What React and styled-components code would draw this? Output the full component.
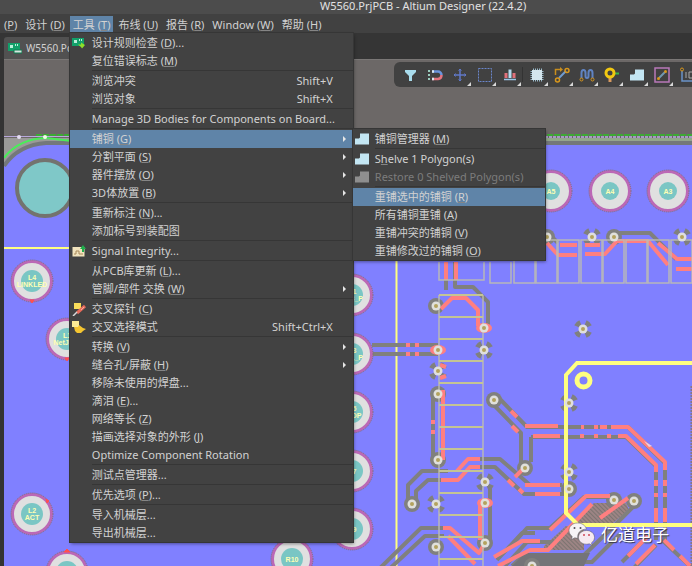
import React from "react";
import styled, { createGlobalStyle } from "styled-components";

const GlobalStyle = createGlobalStyle`
  * { box-sizing: border-box; }
  body {
    margin: 0;
    background: #333333;
    overflow: hidden;
    font-family: "Noto Sans", "Noto Sans CJK SC", sans-serif;
    font-size: 11px;
    color: #d2d2d2;
  }
  button { font: inherit; color: inherit; border: 0; background: none; padding: 0; }
  ul { list-style: none; margin: 0; padding: 0; }
`;

/* ---------- window frame ---------- */

const Window = styled.div`
  min-height: 100vh;
  display: flex;
  flex-direction: column;
  overflow: hidden;
`;

const TitleBar = styled.header`
  height: 14px;
  padding-left: 320px;
  background: #4c4c4c;
  color: #e2e2e2;
  font-size: 11px;
  line-height: 12px;
  white-space: nowrap;
`;

const MenuBar = styled.nav`
  height: 19px;
  padding: 2px 0 0 1px;
  display: flex;
  gap: 2px;
  background: #414141;
`;

const MenuBarItem = styled.div`
  position: relative;
  z-index: 2;
  flex: none;
`;

const MenuBarButton = styled.button`
  height: 17px;
  padding: 0 3px;
  line-height: 17px;
  white-space: nowrap;
  background: ${(p) => (p.$open ? "#5f84a8" : "transparent")};
`;

const TabStrip = styled.div`
  height: 26px;
  padding: 4px 0 0 4px;
  display: flex;
  background: #353535;
`;

const Tab = styled.button`
  width: 140px;
  padding: 0 4px;
  display: flex;
  align-items: center;
  gap: 4px;
  border-radius: 3px 3px 0 0;
  background: #515151;
  font-size: 10px;
  line-height: 20px;
  white-space: nowrap;
`;

const Workspace = styled.main`
  position: relative;
  flex: 1;
  margin-left: 4px;
  border-top: 1px solid #7a7776;
  background: #6c6867;
  overflow: hidden;
`;

const Board = styled.svg`
  position: absolute;
  inset: 0;
  width: 100%;
  height: 100%;
`;

/* ---------- menus ---------- */

const Menu = styled.ul`
  position: absolute;
  top: ${(p) => (p.$sub ? "-1px" : "100%")};
  left: ${(p) => (p.$sub ? "100%" : "0")};
  width: ${(p) => (p.$sub ? "192px" : "283px")};
  padding-top: 1px;
  background: #424242;
  box-shadow: 0 0 0 1px #363636, 1px 2px 3px rgba(0, 0, 0, 0.4);
`;

const MenuRow = styled.li`
  position: relative;
`;

const MenuButton = styled.button`
  width: 100%;
  height: 18px;
  padding-right: 7px;
  display: grid;
  grid-template-columns: 22px 1fr auto 13px;
  align-items: center;
  text-align: left;
  line-height: 18px;
  white-space: nowrap;
  background: ${(p) => (p.$active ? "#5f84a8" : "transparent")};
  color: ${(p) => (p.disabled ? "#7c7c7c" : "#d2d2d2")};
`;

const MenuIcon = styled.span`
  display: flex;
  padding-left: 2px;
`;

const Divider = styled.li`
  height: 2px;
  margin-left: 22px;
  border-top: 1px solid #363636;
`;

const Arrow = styled.span`
  justify-self: end;
  border-left: 3px solid #e6e6e6;
  border-top: 3px solid transparent;
  border-bottom: 3px solid transparent;
`;

const Mnemonic = styled.span`
  text-decoration: underline;
  text-decoration-thickness: 1px;
  text-underline-offset: 1px;
  text-decoration-color: #858585;
`;

/* ---------- floating tool bar ---------- */

const ToolBar = styled.div`
  position: absolute;
  top: 2px;
  left: 390px;
  height: 25px;
  padding-left: 3px;
  display: flex;
  border-radius: 6px 0 0 6px;
  background: #414141;
`;

const ToolButton = styled.button`
  position: relative;
  width: 25px;
  height: 25px;
  display: grid;
  place-items: center;
  &::after {
    content: "";
    display: ${(p) => (p.$more ? "block" : "none")};
    position: absolute;
    right: 1px;
    bottom: 1px;
    border-left: 4px solid transparent;
    border-bottom: 4px solid #d8d8d8;
  }
`;

const ToolSeparator = styled.span`
  width: 1px;
  margin: 5px 1px 5px 0;
  background: #333333;
`;

const Watermark = styled.div`
  position: absolute;
  right: 23px;
  bottom: 17px;
  display: flex;
  align-items: center;
  gap: 6px;
  color: #ffffff;
  font-size: 17px;
  line-height: 28px;
  text-shadow: 1px 1px 1px #333344;
`;

/* ---------- icons ---------- */

const BoardIcon = ({ check }) => (
  <svg width="14" height="12" viewBox="0 0 14 12">
    <rect x="0" y="1" width="12" height="8" fill="#12a06a" />
    <path d="M2 3h3v3H2zM7 2h1v2H7zM9 2h1v2H9z" fill="#b9f0da" />
    {check ? (
      <path d="M6 7.500h3V5.500l4 2.500-3 3.500-1-1.500z" fill="#8fe02a" />
    ) : (
      <path d="M6 8h8v3H6z" fill="#d8e6e0" stroke="#0d7c50" strokeWidth="1" />
    )}
  </svg>
);

const SignalIcon = () => (
  <svg width="14" height="12" viewBox="0 0 14 12">
    <rect x="0.500" y="2" width="12" height="9.500" fill="#f1e3bd" />
    <path d="M2 9h2V6h3v3h4" stroke="#a8895a" fill="none" />
    <path d="M8 4l3-4 3 4h-2v3h-2V4z" fill="#1fae4c" />
  </svg>
);

const ProbeIcon = () => (
  <svg width="14" height="13" viewBox="0 0 14 13">
    <rect x="2" y="0" width="7" height="6" fill="#f8dc5a" />
    <path d="M13 3l-8 7" stroke="#e86a5a" strokeWidth="3" />
    <path d="M5 9l-4 4" stroke="#d8d8d8" strokeWidth="1.500" />
    <path d="M9 7l3-3" stroke="#f6b0a0" />
  </svg>
);

const SelectIcon = () => (
  <svg width="14" height="13" viewBox="0 0 14 13">
    <rect x="0" y="0" width="7" height="6" fill="#fbeb96" />
    <path d="M2 6h4l1-2 4 3 3 1-3 2-2 2H5L3 10z" fill="#f4c531" />
  </svg>
);

const PolygonIcon = ({ color = "#c3e6f3" }) => (
  <svg width="14" height="12" viewBox="0 0 14 12">
    <path d="M0 11.500V5.500h4L5 4.500V0.500h9v11z" fill={color} />
  </svg>
);

const tools = [
  <svg key="filter" width="14" height="14" viewBox="0 0 14 14">
    <path d="M2 2h11v2L9 8v5H6V8L2 4z" fill="#a9dcec" />
  </svg>,
  <svg key="snap" width="16" height="14" viewBox="0 0 16 14" fill="none">
    <path d="M2 2v11" stroke="#9ccfc0" strokeWidth="2" strokeDasharray="2 2" />
    <path d="M5 3.500h6a3.500 3.500 0 0 1 3.500 3.500" stroke="#6a93dd" strokeWidth="2.500" />
    <path d="M5 11h6a4 4 0 0 0 3.500-4" stroke="#e27480" strokeWidth="2.500" />
    <path d="M5 3.500h2M5 11h2" stroke="#dce8f0" strokeWidth="2.500" />
  </svg>,
  <svg key="move" width="14" height="14" viewBox="0 0 14 14" fill="none" stroke="#6078c8">
    <path d="M7 1v12M1 7h12" strokeWidth="1.500" />
    <path d="M5.500 2.500L7 1l1.500 1.500M5.500 11.500L7 13l1.500-1.500M2.500 5.500L1 7l1.500 1.500M11.500 5.500L13 7l-1.500 1.500" />
  </svg>,
  <svg key="area" width="16" height="14" viewBox="0 0 16 14" fill="none">
    <rect x="1.500" y="0.500" width="13" height="13" stroke="#6a86cc" strokeDasharray="2 1" />
  </svg>,
  <svg key="align" width="14" height="14" viewBox="0 0 14 14">
    <path d="M1.500 5h3v5h-3zM9.500 5h3v5h-3z" fill="#e0707a" />
    <path d="M5.500 1.500h3V10h-3z" fill="#b5dcf0" />
    <path d="M1 11.500h12" stroke="#9cc6e8" strokeWidth="1.500" />
  </svg>,
  <svg key="chip" width="14" height="14" viewBox="0 0 14 14">
    <path d="M3 1.500h9M3 12.500h9M1.500 3v9M12.500 3v9" stroke="#9cbccc" strokeWidth="2" strokeDasharray="1 1" />
    <rect x="2" y="2" width="10" height="10" fill="#d4e6ee" />
  </svg>,
  <svg key="route" width="16" height="16" viewBox="0 0 16 16" fill="none">
    <path d="M1.500 8V2.500H7" stroke="#c98e1e" strokeWidth="1.500" />
    <path d="M6 0l3 2.500L6 5z" fill="#c98e1e" />
    <path d="M5 11l7-7" stroke="#6e9bd0" strokeWidth="2" />
    <circle cx="3.500" cy="13" r="2" stroke="#d9971c" strokeWidth="1.500" />
    <circle cx="13" cy="3.500" r="2" stroke="#d9971c" strokeWidth="1.500" />
  </svg>,
  <svg key="tune" width="16" height="14" viewBox="0 0 16 14" fill="none">
    <path d="M2.500 10V5q0-3 2-3t2 3v3q0 2 1.500 2T9.500 8V5q0-3 2-3t2 3v5" stroke="#6084c4" strokeWidth="2" />
    <circle cx="2.500" cy="11.500" r="1.500" stroke="#d9971c" />
    <circle cx="13.500" cy="11.500" r="1.500" stroke="#d9971c" />
  </svg>,
  <svg key="via" width="16" height="16" viewBox="0 0 16 16" fill="none">
    <path d="M9 6.500h6" stroke="#3eb54a" strokeWidth="2" />
    <path d="M6 9v6" stroke="#d99a60" strokeWidth="3" />
    <circle cx="6" cy="6" r="4" stroke="#f2c811" strokeWidth="3" />
  </svg>,
  <PolygonIcon key="polygon" />,
  <svg key="line" width="16" height="16" viewBox="0 0 16 16" fill="none">
    <rect x="1" y="1" width="14" height="14" stroke="#b978b9" strokeWidth="1.500" />
    <path d="M5 11l6-6" stroke="#7198b0" strokeWidth="2" />
    <circle cx="4.500" cy="11.500" r="1.500" fill="#d9971c" />
    <circle cx="11.500" cy="4.500" r="1.500" fill="#d9971c" />
  </svg>,
  <svg key="measure" width="16" height="16" viewBox="0 0 16 16" fill="none">
    <path d="M3 4v10h13" stroke="#6a93c8" strokeWidth="1.500" />
    <circle cx="3" cy="2.500" r="1.500" stroke="#d9971c" />
    <path d="M7 5v6M10 5h4v6h-4z" stroke="#a8a8a8" />
  </svg>,
];

const toolNames = ["Filter", "Snap", "Move", "Select area", "Align", "Component", "Route", "Tune length", "Via", "Polygon", "Line", "Dimension"];

/* ---------- menu data: [text, mnemonic, tail, options] ---------- */

const toolsMenu = [
  ["设计规则检查", "D", "...", { icon: <BoardIcon check /> }],
  ["复位错误标志", "M"],
  null,
  ["浏览冲突", "", "", { keys: "Shift+V" }],
  ["浏览对象", "", "", { keys: "Shift+X" }],
  null,
  ["Manage 3D Bodies for Components on Board..."],
  null,
  ["铺铜", "G", "", { sub: true, active: true }],
  ["分割平面", "S", "", { sub: true }],
  ["器件摆放", "O", "", { sub: true }],
  ["3D体放置", "B", "", { sub: true }],
  null,
  ["重新标注", "N", "..."],
  ["添加标号到装配图"],
  null,
  ["Signal Integrity...", "", "", { icon: <SignalIcon /> }],
  null,
  ["从PCB库更新", "L", "..."],
  ["管脚/部件 交换", "W", "", { sub: true }],
  null,
  ["交叉探针", "C", "", { icon: <ProbeIcon /> }],
  ["交叉选择模式", "", "", { icon: <SelectIcon />, keys: "Shift+Ctrl+X" }],
  null,
  ["转换", "V", "", { sub: true }],
  ["缝合孔/屏蔽", "H", "", { sub: true }],
  ["移除未使用的焊盘..."],
  ["滴泪", "E", "..."],
  ["网络等长", "Z"],
  ["描画选择对象的外形", "J"],
  ["Optimize Component Rotation"],
  null,
  ["测试点管理器..."],
  null,
  ["优先选项", "P", "..."],
  null,
  ["导入机械层..."],
  ["导出机械层..."],
];

const polygonMenu = [
  ["铺铜管理器", "M", "", { icon: <PolygonIcon /> }],
  null,
  [<>S<Mnemonic>h</Mnemonic>elve 1 Polygon(s)</>, "", "", { icon: <PolygonIcon /> }],
  ["Restore 0 Shelved Polygon(s)", "", "", { icon: <PolygonIcon color="#8e8e8e" />, disabled: true }],
  null,
  ["重铺选中的铺铜", "R", "", { active: true }],
  ["所有铺铜重铺", "A"],
  ["重铺冲突的铺铜", "V"],
  ["重铺修改过的铺铜", "O"],
];

const Label = ({ text, letter, tail }) => (
  <span>
    {text}
    {letter ? <>{text ? " " : ""}(<Mnemonic>{letter}</Mnemonic>)</> : null}
    {tail}
  </span>
);

const MenuList = ({ items, sub }) => (
  <Menu $sub={sub} role="menu">
    {items.map((item, i) => {
      if (!item) return <Divider key={i} role="separator" />;
      const [text, letter, tail, o = {}] = item;
      return (
        <MenuRow key={i} role="none">
          <MenuButton role="menuitem" $active={o.active} disabled={o.disabled}>
            <MenuIcon>{o.icon}</MenuIcon>
            <Label text={text} letter={letter} tail={tail} />
            <span>{o.keys}</span>
            {o.sub ? <Arrow /> : <span />}
          </MenuButton>
          {o.sub && o.active ? <MenuList items={polygonMenu} sub /> : null}
        </MenuRow>
      );
    })}
  </Menu>
);

const menuBarItems = [["", "P"], ["设计", "D"], ["工具", "T"], ["布线", "U"], ["报告", "R"], ["Window", "W"], ["帮助", "H"]];

/* ---------- circuit board drawing ---------- */

const GRAY = "#80807e";
const RED = "#ff7f80";

const pads = [
  [32, 281, 11, "L4", "LINKLED"], [67, 339, 11, "L1", "NetJ2_1"], [32, 514, 11, "L2", "ACT"], [67, 572, 11, "", ""],
  [352, 295, 11, "R1", "TD3_P"], [352, 354, 11, "R3", "TD1_P"], [352, 412, 11, "R5", "STOP"], [352, 471, 11, "R7", ""], [352, 529, 11, "R9", ""],
  [292, 559, 11, "R10", ""],
  [551, 191, 9, "A5", ""], [610, 191, 9, "A4", ""], [668, 191, 9, "A3", ""],
];

/* x, y, halo: solid ("s"), thermal ("t") or teardrop ("r"), halo colour */
const vias = [
  [436, 306, "s", GRAY], [484, 328, "r", RED], [438, 350, "r", RED], [484, 350, "t", GRAY], [438, 371, "t", GRAY],
  [438, 394, "s", GRAY], [494, 400, "s", GRAY], [438, 460, "s", GRAY], [525, 468, "s", GRAY], [485, 482, "t", GRAY],
  [412, 504, "s", GRAY], [436, 504, "t", GRAY], [485, 503, "r", RED], [485, 543, "s", GRAY], [436, 547, "s", GRAY],
  [547, 237, "s", GRAY], [592, 237, "t", GRAY], [614, 237, "s", GRAY], [682, 237, "t", GRAY], [583, 329, "t", GRAY],
  [569, 403, "t", GRAY], [569, 472, "t", GRAY], [569, 489, "s", GRAY], [614, 500, "s", GRAY], [634, 501, "s", GRAY], [532, 566, "s", GRAY],
];

const grayTraces = [
  "M372 345H438", "M372 354H438", "M455 262V287H473L488 302V326", "M446 262V290",
  "M433 396V460", "M497 396L527 427H628L665 463V540", "M492 403L521 433V466", "M531 437V462",
  "M531 437H626L656 466V540", "M479 459H500L530 485H562", "M479 467H495L524 494H566",
  "M448 471H422L408 485V502", "M450 480H428L416 491V502", "M376 572L421 528H446", "M384 574L425 536H444",
  "M490 485V540", "M547 232L558 243", "M614 233H650L676 259", "M497 560L522 533H535", "M505 566L527 542H560",
  "M512 545L527 528H550L584 497H610", "M512 566L524 555H584L612 528L634 506", "M524 562H592L620 534",
  "M656 545L632 570", "M662 540L692 568", "M650 534L622 562",
];

const redTraces = [
  "M446 262V280", "M456 262V280", "M441 309L452 298H466L478 310V326", "M443 390V460",
  "M441 480H458L470 467H480", "M457 471L468 459H480", "M443 528H450L479 553L487 540", "M448 536L475 564",
  "M480 500V540", "M525 426H558", "M600 427H607M594 427H598M581 427H584M611 427H628L665 462V470",
  "M533 436H560M580 436H584M594 436H598M607 436H611M618 436H626L656 465V472",
  "M656 480V486M656 493V497M665 480V486M665 493V497M656 508V522M665 508V522",
  "M511 411L517 417M512 426L518 432M515 477L522 470M508 480L514 486M519 489L523 493",
  "M525 485H560M535 494H560", "M547 243L558 255H577M560 245H577M585 245H600M585 254H605L617 241H648L668 265",
  "M658 243L677 259H692M676 269H692", "M406 345H410M415 345H419M406 354H410M415 354H419M431 422H435M431 432H435",
  "M494 557L522 541H540M550 530L586 496H610", "M498 566L530 550H548L592 504", "M628 498L600 518",
  "M655 545L636 564M664 540L674 550M680 556L690 566M648 536L628 556", "M440 365L446 367M440 378L446 376",
];

const columnRows = Array.from({ length: 13 }, (_, i) => 295 + i * 22);
const topCells = [514, 536, 558, 581, 603, 626, 648, 671];

const Halo = ({ x, y, kind, color }) => {
  if (kind === "s") return <circle cx={x} cy={y} r="8" fill={color} />;
  if (kind === "r") return <ellipse cx={x} cy={y} rx="8" ry="5" fill={color} />;
  return (
    <circle cx={x} cy={y} r="7" fill="none" stroke={color} strokeWidth="5" pathLength="8" strokeDasharray="1 1" strokeDashoffset="-0.500" />
  );
};

const Circuit = () => (
  <Board viewBox="4 60 688 506" preserveAspectRatio="xMinYMin slice" aria-hidden="true">
    <defs>
      <pattern id="hatch" width="3" height="3" patternUnits="userSpaceOnUse" patternTransform="rotate(-45)">
        <rect width="3" height="3" fill="#9c8484" />
        <rect width="1" height="3" fill="#7c7470" />
      </pattern>
    </defs>
    <path d="M4 138H700V600H4z" fill="#9a9a98" />
    <path d="M4 166Q18 145 44 143H700V600H4z" fill="#8080ff" />
    <path d="M4 166Q18 145 46 143H700" stroke="#74787a" strokeWidth="4" fill="none" />
    <path d="M4 158Q18 139 46 138L72 141" stroke="#49ee58" strokeWidth="2" fill="none" />
    <path d="M4 136.500H70" stroke="#b9a9dc" />
    <path d="M36 135H692" stroke="#3caa34" strokeWidth="2" strokeDasharray="6 1" fill="none" />
    <path d="M545 137H692" stroke="#a69ac4" strokeWidth="2" strokeDasharray="3 1" />
    <path d="M545 139.500H692" stroke="#8fae86" strokeWidth="2" />
    <circle cx="19" cy="137" r="2" fill="#e4dcf2" />
    <circle cx="45" cy="137" r="2" fill="#f2fbe8" />
    <circle cx="45" cy="188" r="28" fill="#7fc8c8" stroke="#73736f" strokeWidth="4" />
    <path d="M4 248H396.500V566" stroke="#ffff80" strokeWidth="2" fill="none" />

    <path d="M580 517L594 503H626L629 510L612 524H574z" fill="url(#hatch)" />
    <path d="M544 546L566 526H584V550H544z" fill="url(#hatch)" />
    <g fill="none" stroke={GRAY} strokeWidth="4" strokeLinejoin="round">
      {grayTraces.map((d) => <path key={d} d={d} />)}
    </g>
    <path d="M512 566L525 553H590L584 566z" fill="#747478" />
    <path d="M692 386V566" stroke="#857884" strokeWidth="3" strokeDasharray="2 1" />

    {vias.map(([x, y, kind, color]) => <Halo key={`${x}-${y}`} x={x} y={y} kind={kind} color={color} />)}
    <g fill="none" stroke={RED} strokeWidth="4" strokeLinejoin="round">
      {redTraces.map((d) => <path key={d} d={d} />)}
    </g>

    <g fill="none" stroke="#bdbdb4" strokeWidth="1.500" opacity="0.900">
      <path d="M439 262V280H484V262M490 262V283H511V262" />
      {topCells.map((x) => <rect key={x} x={x} y="240" width="21" height="43" />)}
      <path d="M439 295V566M483 295V566" />
    </g>
    <g stroke="#c4c494" strokeWidth="2">
      {columnRows.map((y) => <path key={y} d={`M439 ${y}H483`} />)}
    </g>

    <g fill="none" stroke="#ffff80" strokeWidth="4">
      <path d="M700 363H577L566 375V513L578 525H700" />
      <circle cx="583.500" cy="380.500" r="6.500" strokeWidth="5" />
    </g>

    {vias.map(([x, y]) => (
      <g key={`${x}-${y}`}>
        <circle cx={x} cy={y} r="4.500" fill="#e0e0dc" />
        <circle cx={x} cy={y} r="2" fill="#b3a25e" />
      </g>
    ))}

    {pads.map(([x, y, core, top, bottom]) => (
      <g key={`${x}-${y}`}>
        <circle cx={x} cy={y} r="19.500" fill="#e0e0e0" stroke="#bb68b6" strokeWidth="3" />
        <circle cx={x} cy={y} r="21" fill="none" stroke="#80707c" strokeDasharray="1 1" />
        <circle cx={x} cy={y} r={core} fill="#7ac6c4" />
        <g fill="#ffffb4" fontFamily="Liberation Sans, sans-serif" fontWeight="bold" textAnchor="middle" fontSize="7">
          <text x={x} y={bottom ? y - 1 : y + 3}>{top}</text>
          <text x={x} y={y + 6}>{bottom}</text>
        </g>
      </g>
    ))}
    <path d="M32 303l-2-3h4zM67 361l-2-3h4zM46 499l3 2-2 2zM67 549l3 3h-6z" fill="#ff5050" stroke="#ff5050" />
    <path d="M644 441l8 5-3 1-5-6" fill="#e8d0e4" />
  </Board>
);

const ChatLogo = () => (
  <svg width="27" height="26" viewBox="0 0 27 26" aria-hidden="true">
    <path d="M9.500 1C4.500 1 1 4.300 1 8.500c0 2.400 1.200 4.500 3.200 5.900L3.500 17.500l3.300-1.700c1 .3 2 .4 3 .4C9 10.500 13 7 18.500 7.200 17.500 3.500 14 1 9.500 1z" fill="#f7f3f6" stroke="#55555f" strokeWidth="0.500" />
    <path d="M18.500 8.500c-4.600 0-8 3-8 6.900s3.400 6.800 8 6.800c1 0 2-.1 2.800-.4l2.900 1.600-.7-2.600c1.900-1.300 3-3.200 3-5.400 0-3.900-3.500-6.900-8-6.900z" fill="#f7eaf1" stroke="#55555f" strokeWidth="0.500" />
    <circle cx="6.500" cy="6" r="1" fill="#505058" />
    <circle cx="12.500" cy="6" r="1" fill="#505058" />
    <circle cx="16" cy="13" r="1" fill="#d04858" />
    <circle cx="21" cy="13" r="1" fill="#d04858" />
  </svg>
);

export default function App() {
  return (
    <Window>
      <GlobalStyle />
      <TitleBar>W5560.PrjPCB - Altium Designer (22.4.2)</TitleBar>
      <MenuBar>
        {menuBarItems.map(([text, letter]) => {
          const open = letter === "T";
          return (
            <MenuBarItem key={letter}>
              <MenuBarButton $open={open}>
                <Label text={text} letter={letter} />
              </MenuBarButton>
              {open ? <MenuList items={toolsMenu} /> : null}
            </MenuBarItem>
          );
        })}
      </MenuBar>
      <TabStrip>
        <Tab>
          <BoardIcon />
          W5560.PcbDoc
        </Tab>
      </TabStrip>
      <Workspace>
        <Circuit />
        <ToolBar role="toolbar">
          {tools.map((icon, i) => (
            <React.Fragment key={toolNames[i]}>
              {i === 5 ? <ToolSeparator /> : null}
              <ToolButton aria-label={toolNames[i]} $more={i > 1}>{icon}</ToolButton>
            </React.Fragment>
          ))}
        </ToolBar>
        <Watermark>
          <ChatLogo />
          亿道电子
        </Watermark>
      </Workspace>
    </Window>
  );
}
